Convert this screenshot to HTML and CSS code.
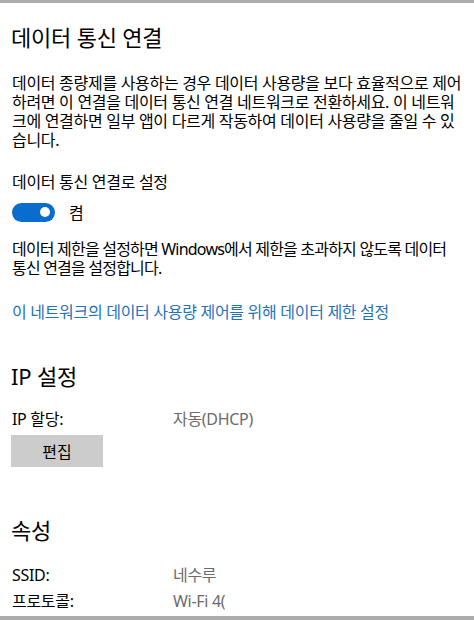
FILE: index.html
```html
<!DOCTYPE html>
<html lang="ko">
<head>
<meta charset="utf-8">
<link rel="stylesheet" href="styles.css">
</head>
<body>
<div class="frame">
  <h1 class="title">데이터 통신 연결</h1>
  <p class="para">데이터 종량제를 사용하는 경우 데이터 사용량을 보다 효율적으로 제어하려면 이 연결을 데이터 통신 연결 네트워크로 전환하세요. 이 네트워크에 연결하면 일부 앱이 다르게 작동하여 데이터 사용량을 줄일 수 있습니다.</p>
  <div class="label">데이터 통신 연결로 설정</div>
  <div class="toggle-row">
    <span class="toggle"><span class="knob"></span></span>
    <span class="toggle-text">켬</span>
  </div>
  <p class="para para2">데이터 제한을 설정하면 Windows에서 제한을 초과하지 않도록 데이터 통신 연결을 설정합니다.</p>
  <div class="link">이 네트워크의 데이터 사용량 제어를 위해 데이터 제한 설정</div>
  <h2 class="heading ip">IP 설정</h2>
  <div class="row first"><span class="key">IP 할당:</span><span class="val">자동(DHCP)</span></div>
  <div class="btn">편집</div>
  <h2 class="heading props">속성</h2>
  <div class="row first props-first"><span class="key">SSID:</span><span class="val">네수루</span></div>
  <div class="row second"><span class="key">프로토콜:</span><span class="val">Wi-Fi 4(</span></div>
</div>
</body>
</html>
```

FILE: styles.css
```css
html, body {
  margin: 0;
  padding: 0;
  background: #fff;
}
.frame {
  box-sizing: border-box;
  height: 620px;
  border-top: 3px solid #acacac;
  border-bottom: 4px solid #acacac;
  padding: 0 12px 0 12px;
  font-family: "Noto Sans", "Noto Sans CJK KR", sans-serif;
  color: #000;
  overflow: hidden;
}
.title, .heading {
  font-family: "Noto Sans", "Noto Sans CJK KR", sans-serif;
  font-weight: 400;
  font-size: 22px;
  letter-spacing: -0.2px;
  line-height: 30px;
  margin: 19px 0 0 -1px;
}
.para {
  font-size: 16px;
  letter-spacing: -0.3px;
  line-height: 19px;
  margin: 22px 0 0 0;
}
.label {
  font-size: 16px;
  letter-spacing: -0.3px;
  line-height: 19px;
  margin-top: 23px;
}
.toggle-row {
  display: flex;
  align-items: center;
  margin-top: 10px;
  height: 20px;
}
.toggle {
  box-sizing: border-box;
  width: 43px;
  height: 19px;
  border-radius: 10px;
  background: #0a6ccf;
  display: flex;
  align-items: center;
  justify-content: flex-end;
  padding-right: 5px;
}
.knob {
  width: 10px;
  height: 10px;
  border-radius: 50%;
  background: #fff;
}
.toggle-text {
  font-size: 16px;
  margin-left: 14px;
}
.para2 {
  margin-top: 18px;
  letter-spacing: -0.8px;
  word-break: keep-all;
}
.link {
  font-size: 16px;
  letter-spacing: -0.3px;
  line-height: 19px;
  color: #1f72bb;
  margin-top: 25px;
}
.heading.ip {
  margin-top: 39px;
}
.heading.props {
  margin-top: 48px;
}
.row {
  display: flex;
  font-size: 16px;
  letter-spacing: -0.3px;
  line-height: 19px;
}
.row.first {
  margin-top: 19px;
}
.row.props-first {
  margin-top: 21px;
}
.row.second {
  margin-top: 7px;
}
.key {
  width: 161px;
  flex: none;
}
.val {
  color: #6b6b6b;
  white-space: nowrap;
}
.btn {
  width: 92px;
  height: 32px;
  margin-top: 6px;
  margin-left: -1px;
  background: #cccccc;
  font-size: 16px;
  display: flex;
  align-items: center;
  justify-content: center;
}
```
